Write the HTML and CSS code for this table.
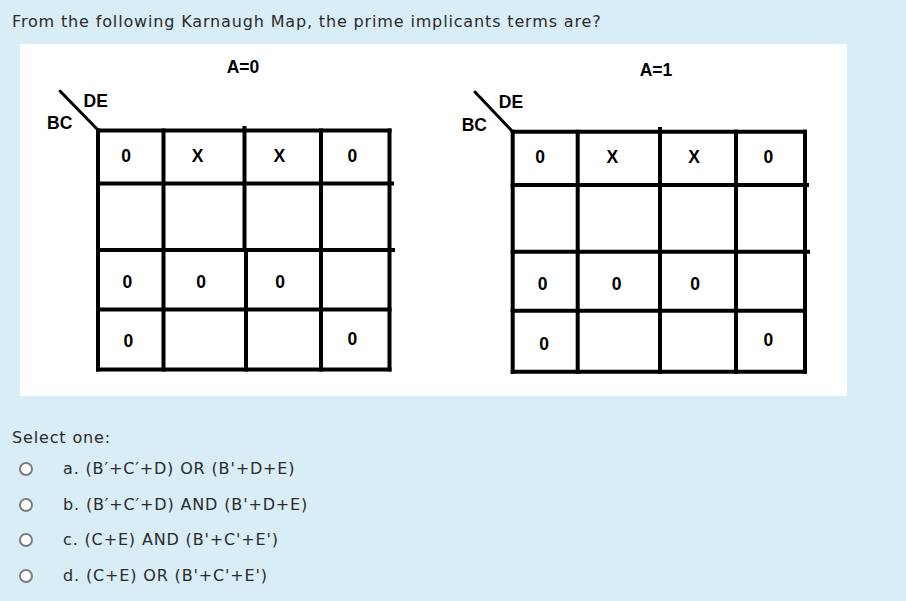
FILE: index.html
```html
<!DOCTYPE html>
<html>
<head>
<meta charset="utf-8">
<link rel="stylesheet" href="styles.css">
</head>
<body>
<div class="que">
  <p class="qtext">From the following Karnaugh Map, the prime implicants terms are?</p>
  <div class="kmap">
    <svg width="827" height="352" viewBox="0 0 827 352" xmlns="http://www.w3.org/2000/svg">
      <rect x="0" y="0" width="827" height="352" fill="#fff"/>
      <g stroke="#000" stroke-width="4" fill="none" stroke-linecap="square">
        <!-- left map -->
        <line x1="40" y1="47" x2="78" y2="86" stroke-width="3" stroke-linecap="round"/>
        <line x1="78" y1="86.5" x2="369.5" y2="86.5"/>
        <line x1="78" y1="139.5" x2="372" y2="139.5"/>
        <line x1="78" y1="206" x2="373" y2="206"/>
        <line x1="78" y1="265.5" x2="369.5" y2="265.5"/>
        <line x1="78" y1="325.5" x2="369.5" y2="325.5"/>
        <line x1="78" y1="86.5" x2="78" y2="325.5"/>
        <line x1="143.5" y1="86.5" x2="143.5" y2="325.5"/>
        <line x1="224.5" y1="84" x2="224.5" y2="206"/>
        <line x1="226" y1="206" x2="226" y2="325.5"/>
        <line x1="301" y1="86.5" x2="301" y2="325.5"/>
        <line x1="369.5" y1="86.5" x2="369.5" y2="325.5"/>
        <!-- right map -->
        <line x1="455" y1="48" x2="492.7" y2="87.7" stroke-width="3" stroke-linecap="round"/>
        <line x1="492.7" y1="87.7" x2="785" y2="87.7"/>
        <line x1="492.7" y1="141" x2="787" y2="141"/>
        <line x1="492.7" y1="207.7" x2="788" y2="207.7"/>
        <line x1="492.7" y1="266.7" x2="785" y2="266.7"/>
        <line x1="492.7" y1="327.7" x2="785" y2="327.7"/>
        <line x1="492.7" y1="87.7" x2="492.7" y2="327.7"/>
        <line x1="557.7" y1="87.7" x2="557.7" y2="327.7"/>
        <line x1="640" y1="85" x2="640" y2="327.7"/>
        <line x1="716" y1="87.7" x2="716" y2="327.7"/>
        <line x1="785" y1="87.7" x2="785" y2="327.7"/>
      </g>
      <g class="kt" text-anchor="middle">
        <text x="223" y="28.5">A=0</text>
        <text x="75.7" y="62.5">DE</text>
        <text x="39.7" y="85">BC</text>
        <text x="106" y="118">0</text>
        <text x="177.7" y="118">X</text>
        <text x="259.3" y="118">X</text>
        <text x="332.3" y="118">0</text>
        <text x="107.3" y="244.2">0</text>
        <text x="181" y="244.2">0</text>
        <text x="260" y="244.2">0</text>
        <text x="108.3" y="303.2">0</text>
        <text x="332.3" y="300.8">0</text>

        <text x="636" y="31.5">A=1</text>
        <text x="491" y="64.2">DE</text>
        <text x="454.3" y="86.8">BC</text>
        <text x="520" y="119.2">0</text>
        <text x="592.3" y="119.2">X</text>
        <text x="674" y="119.2">X</text>
        <text x="748.3" y="119.2">0</text>
        <text x="522.7" y="245.8">0</text>
        <text x="596.7" y="245.8">0</text>
        <text x="675" y="245.8">0</text>
        <text x="524" y="305.8">0</text>
        <text x="748.3" y="301.8">0</text>
      </g>
    </svg>
  </div>
  <div class="prompt">Select one:</div>
  <div class="answer">
    <label class="opt"><span class="radio"></span><span class="lbl">a. (B′+C′+D) OR (B'+D+E)</span></label>
    <label class="opt"><span class="radio"></span><span class="lbl">b. (B′+C′+D) AND (B'+D+E)</span></label>
    <label class="opt"><span class="radio"></span><span class="lbl">c. (C+E) AND (B'+C'+E')</span></label>
    <label class="opt"><span class="radio"></span><span class="lbl">d. (C+E) OR (B'+C'+E')</span></label>
  </div>
</div>
</body>
</html>
```
FILE: styles.css
```css
html, body {
  margin: 0;
  padding: 0;
  background: #d9edf7;
}
body {
  font-family: "DejaVu Sans", Verdana, sans-serif;
  font-size: 16px;
  letter-spacing: 0.85px;
  color: #2a2a2a;
}
.que {
  padding: 11px 12px 0 12px;
}
.qtext {
  margin: 0;
  line-height: 22px;
}
.kmap {
  margin: 11px 0 0 8px;
  width: 827px;
  height: 352px;
  letter-spacing: 0;
}
.kmap svg {
  display: block;
}
.kt text {
  font-family: "Liberation Sans", Arial, sans-serif;
  font-weight: bold;
  font-size: 17.5px;
  fill: #000;
}
.prompt {
  margin-top: 31px;
  line-height: 22px;
}
.answer {
  display: flex;
  flex-direction: column;
  gap: 13.5px;
  margin-top: 9px;
}
.opt {
  display: flex;
  align-items: center;
  line-height: 22px;
  padding-left: 7px;
}
.radio {
  width: 14px;
  height: 14px;
  box-sizing: border-box;
  border: 2px solid #7d7d7d;
  border-radius: 50%;
  background: #fff;
  margin-right: 30px;
  flex: none;
}
```
